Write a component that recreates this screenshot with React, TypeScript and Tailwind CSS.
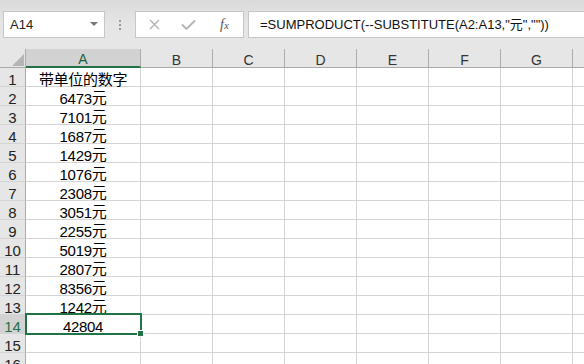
import React from "react";

const font = { fontFamily: '"Liberation Sans", "Noto Sans CJK SC", sans-serif' };

const values = [
  "带单位的数字",
  "6473元",
  "7101元",
  "1687元",
  "1429元",
  "1076元",
  "2308元",
  "3051元",
  "2255元",
  "5019元",
  "2807元",
  "8356元",
  "1242元",
  "42804",
  "",
  "",
];

const otherCols = ["B", "C", "D", "E", "F", "G"];

// 元 sits a bit low in Noto CJK next to Liberation digits
function CellText({ v }: { v: string }) {
  if (v.endsWith("元")) {
    return (
      <>
        {v.slice(0, -1)}
        <span className="relative top-[-1px]">元</span>
      </>
    );
  }
  return <>{v}</>;
}

export default function App() {
  return (
    <div
      className="relative w-[584px] h-[364px] overflow-hidden bg-white text-black"
      style={font}
    >
      {/* Formula bar */}
      <div className="h-[49px] bg-[#e6e6e6] bg-gradient-to-b from-[#dadada] via-[#e6e6e6] to-[#e6e6e6] flex items-start pt-[11px]">
        <div className="ml-[3px] w-[102px] h-[27px] bg-white border border-[#c6c6c6] flex items-center pl-[6px] pr-[6px] text-[13px] text-[#222]">
          <span className="flex-1">A14</span>
          <svg width="8" height="5" viewBox="0 0 8 5">
            <path d="M0 0 H8 L4 4 Z" fill="#777" />
          </svg>
        </div>
        <div className="w-[30px] h-[27px] flex flex-col items-center justify-center gap-[2px]">
          <span className="w-[2px] h-[2px] bg-[#9a9a9a]" />
          <span className="w-[2px] h-[2px] bg-[#9a9a9a]" />
          <span className="w-[2px] h-[2px] bg-[#9a9a9a]" />
        </div>
        <div className="w-[109px] h-[27px] bg-white border border-[#c6c6c6] flex items-center">
          <svg className="ml-[13px]" width="11" height="11" viewBox="0 0 11 11">
            <path d="M1 1 L10 10 M10 1 L1 10" stroke="#b3b3b3" strokeWidth="1.4" />
          </svg>
          <svg className="ml-[21px]" width="15" height="11" viewBox="0 0 15 11">
            <path d="M1 5.5 L5.5 10 L14 1.5" stroke="#b3b3b3" strokeWidth="1.8" fill="none" />
          </svg>
          <span
            className="ml-[24px] text-[14px] italic text-[#555]"
            style={{ fontFamily: '"Liberation Serif", serif' }}
          >
            f<span className="text-[11px]">x</span>
          </span>
        </div>
        <div className="ml-[4px] flex-1 h-[27px] bg-white border border-[#c6c6c6] border-r-0 flex items-center pl-[11px] text-[13px] text-[#111]">
          =SUMPRODUCT(--SUBSTITUTE(A2:A13,"元",""))
        </div>
      </div>

      {/* Column headers */}
      <div className="flex h-[19px] bg-[#e6e6e6] text-[14px] text-[#333]">
        <div className="w-[26px] border-r border-b border-[#ababab] flex items-end justify-end pr-[1px] pb-[1px]">
          <svg width="12" height="12" viewBox="0 0 12 12">
            <path d="M12 0 V12 H0 Z" fill="#b5b5b5" />
          </svg>
        </div>
        <div className="w-[115px] bg-[#d2d2d2] border-r border-[#ababab] border-b-2 border-b-[#217346] flex items-end justify-center text-[#1e5f3c]">
          <span className="leading-[12px] pb-[1px]">A</span>
        </div>
        {otherCols.map((c) => (
          <div
            key={c}
            className="w-[72px] border-r border-b border-[#ababab] flex items-end justify-center"
          >
            <span className="leading-[12px] pb-[1px]">{c}</span>
          </div>
        ))}
        <div className="flex-1 border-b border-[#ababab]" />
      </div>

      {/* Rows */}
      {values.map((v, i) => {
        const selected = i === 13;
        return (
          <div key={i} className="flex h-[19px] text-[15px]">
            <div
              className={`w-[26px] border-r border-b border-r-[#ababab] border-b-[#d4d4d4] flex items-end justify-center ${
                selected ? "bg-[#d2d2d2] text-[#217346]" : "bg-[#e6e6e6] text-[#222]"
              }`}
            >
              <span className="leading-[12px]">{i + 1}</span>
            </div>
            <div className="w-[115px] border-r border-b border-[#d4d4d4] flex items-end justify-center">
              <span className="leading-[12px] tracking-[-0.3px]">
                <CellText v={v} />
              </span>
            </div>
            {otherCols.map((c) => (
              <div key={c} className="w-[72px] border-r border-b border-[#d4d4d4]" />
            ))}
            <div className="flex-1 border-b border-[#d4d4d4]" />
          </div>
        );
      })}

      {/* Active cell */}
      <div className="absolute left-[25px] top-[313px] w-[117px] h-[22px] border-2 border-[#217346]" />
      <div className="absolute left-[137px] top-[330px] w-[7px] h-[7px] bg-[#217346] border border-white" />
    </div>
  );
}
